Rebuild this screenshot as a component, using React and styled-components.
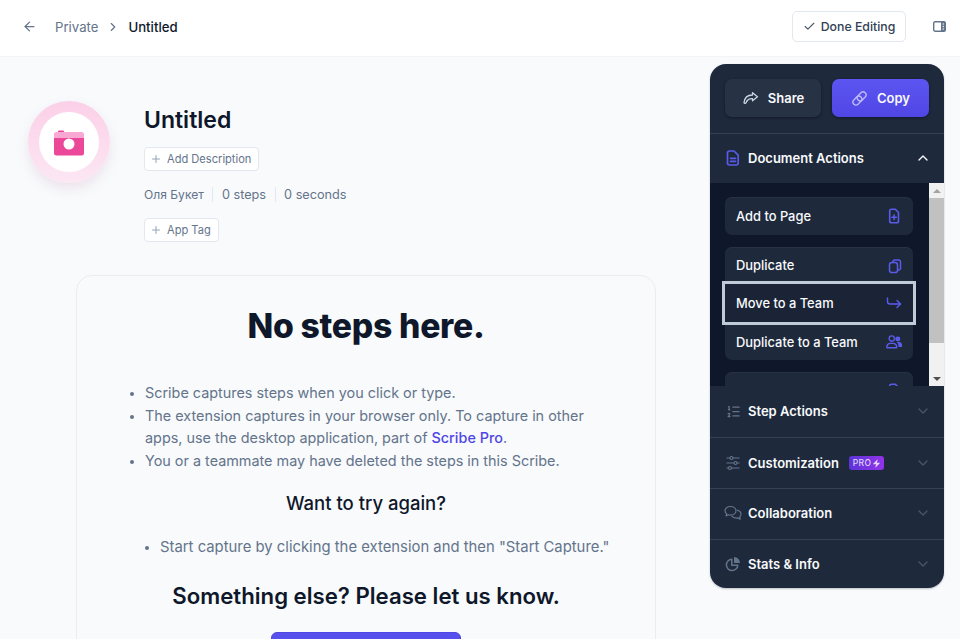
import React from "react";
import styled, { createGlobalStyle } from "styled-components";
import { ArrowLeft, ChevronRight, ChevronUp, ChevronDown, Check, Plus, ListOrdered } from "lucide-react";
import { HiBolt } from "react-icons/hi2";

const Global = createGlobalStyle`
  html, body { margin: 0; height: 639px; overflow: hidden; background: #f8fafc; }
  * { box-sizing: border-box; }
  body { font-family: Inter, "Noto Sans", sans-serif; }
`;
const Page = styled.div`height: 639px; overflow: hidden; display: flex; flex-direction: column;`;
const Header = styled.header`
  height: 57px; flex: none; background: #fff; border-bottom: 1px solid #f1f5f9;
  display: flex; align-items: center; padding: 0 14px 3px 22px;
`;
const Crumbs = styled.nav`display: flex; align-items: center; flex: 1; font-size: 13.2px; color: #64748b;`;
const BackIcon = styled(ArrowLeft)`width: 15px; height: 15px; color: #64748b; margin-right: 18px;`;
const Sep = styled(ChevronRight)`width: 14px; height: 14px; margin: 0 8px 0 8px; color: #64748b;`;
const Current = styled.span`color: #0f172a; font-weight: 500;`;
const DoneButton = styled.button`
  font: 500 12.3px Inter, sans-serif; color: #334155; height: 31px; width: 114px;
  background: #fff; border: 1px solid #e2e8f0; border-radius: 5px;
  display: flex; align-items: center; justify-content: center; gap: 5px; margin-right: 27px;
  svg { width: 13px; height: 13px; color: #475569; }
`;
const PanelToggle = styled.svg`width: 13px; height: 11px; display: block;`;
const Body = styled.div`flex: 1; display: flex; min-height: 0;`;
const Left = styled.main`width: 710px; flex: none; padding: 44px 0 0 28px;`;
const Top = styled.section`display: flex; gap: 34px;`;
const Avatar = styled.div`
  width: 82px; height: 82px; border-radius: 50%; flex: none; background: linear-gradient(#fbd0e8, #fce7f3);
  display: flex; align-items: center; justify-content: center; box-shadow: 0 6px 12px rgba(190,130,160,.18);
`;
const AvatarInner = styled.div`
  width: 60px; height: 60px; border-radius: 50%; background: #fff;
  display: flex; align-items: center; justify-content: center;
`;
const Info = styled.div`display: flex; flex-direction: column; align-items: flex-start; padding-top: 4px;`;
const Title = styled.h2`margin: 0; font-size: 23px; line-height: 30px; font-weight: 600; color: #0f172a;`;
const Chip = styled.button`
  font: 400 11.1px Inter, sans-serif; color: #64748b; height: 24px; padding: 0 7px 0 5px;
  background: #fff; border: 1px solid #e2e8f0; border-radius: 4px;
  display: flex; align-items: center; gap: 5px; margin-top: ${p => p.$top}px;
  svg { width: 12px; height: 12px; color: #94a3b8; }
`;
const Meta = styled.div`display: flex; align-items: center; font-size: 12.7px; color: #64748b; margin-top: 14px; height: 20px; transform: translateY(-1px);`;
const MetaItem = styled.span`
  font-size: ${p => p.$name ? "12.1px" : "inherit"};
  & + & { border-left: 1px solid #e2e8f0; margin-left: 8.5px; padding-left: 8.5px; }
`;
const Card = styled.article`
  margin: 33px 0 0 48px; width: 580px; height: 500px; border: 1px solid #e9edf3; border-radius: 16px;
  padding: 27px 30px 0 41px; text-align: center; background: #f8fafc;
`;
const H1 = styled.h1`margin: 0 0 0 -11px; font-size: 33.7px; line-height: 46px; font-weight: 800; color: #0f172a; letter-spacing: -.3px;`;
const List = styled.ul`
  margin: ${p => p.$top}px 0 0; padding: 0 0 0 ${p => p.$indent}px; text-align: left;
  font-size: ${p => p.$size}px; line-height: 22.5px; color: #64748b;
  li::marker { font-size: 13px; }
`;
const ProLink = styled.a`color: #4f46e5; font-weight: 500;`;
const H3 = styled.h3`margin: 16px 0 0 -11px; font-size: 18.5px; line-height: 30px; font-weight: 500; color: #0f172a;`;
const H2 = styled.h3`margin: 21px 0 0 -11px; font-size: 22.2px; line-height: 32px; font-weight: 600; color: #0f172a;`;
const Primary = styled.button`
  display: block; width: 190px; height: 40px; margin: 20px 0 0 153px; background: #5850ec;
  border: 1px solid #4f46e5; border-radius: 6px;
`;
const Panel = styled.aside`
  width: 234px; height: 524px; margin-top: 7px; border-radius: 16px; background: #1e293b; overflow: hidden;
  box-shadow: 0 1px 2px rgba(15,23,42,.25); display: flex; flex-direction: column; color: #f8fafc;
`;
const Actions = styled.div`height: 70px; padding: 15px 15px 0; display: flex; gap: 11px; border-bottom: 1px solid #334155; flex: none;`;
const ActionButton = styled.button`
  height: 38px; flex: none; width: ${p => p.$w}px; border-radius: 7px; border: 0;
  font: 600 13px Inter, sans-serif; color: #f8fafc; display: flex; align-items: center; justify-content: center; gap: 9px;
  background: ${p => p.$primary ? "linear-gradient(#5d55f1,#4f46e5)" : "#273244"};
  box-shadow: 0 1px 3px rgba(2,6,23,.4);
  svg { width: 17px; height: 17px; color: ${p => p.$primary ? "#bdb9f7" : "#cbd5e1"}; }
`;
const SectionHead = styled.div`
  height: ${p => p.$h}px; flex: none; display: flex; align-items: center; padding: 0 13px ${p => p.$pb || 0}px 16px;
  font-size: 13px; font-weight: 600; color: #f8fafc;
  border-bottom: ${p => p.$line ? "1px solid #334155" : "0"};
`;
const HeadIcon = styled.span`
  width: 14px; height: 16px; margin-right: 8px; display: flex; align-items: center; justify-content: center;
  color: ${p => p.$accent ? "#5b5bea" : "#64748b"};
  svg { flex: none; width: ${p => p.$s || 16}px; height: ${p => p.$s || 16}px; }
`;
const Grow = styled.span`flex: 1;`;
const Caret = styled.span`display: flex; svg { width: 16px; height: 16px; color: ${p => p.$open ? "#f8fafc" : "#475569"}; }`;
const ProBadge = styled.span`
  margin-left: 10px; height: 14px; padding: 0 3px 0 4px; border-radius: 3px; background: linear-gradient(90deg,#5b34d6,#9333ea);
  font-size: 8.5px; font-weight: 500; letter-spacing: .3px; color: #dbd4fb; display: flex; align-items: center; gap: 1px;
  svg { width: 9px; height: 9px; color: #ddd6fe; }
`;
const ScrollBox = styled.div`height: 203px; flex: none; background: #0f172a; display: flex; overflow: hidden;`;
const Items = styled.div`flex: 1; padding: 14px 16px 0 15px; overflow: hidden; display: flex; flex-direction: column; gap: 12px; height: 203px;`;
const Group = styled.div`flex: none; background: #1e293b; border-radius: 7px; box-shadow: inset 0 1px 0 #263245;`;
const Row = styled.div`
  height: ${p => p.$h || 38}px; padding: ${p => p.$pt || 0}px 11px 0; display: flex; align-items: center; justify-content: space-between;
  font-size: 12.9px; font-weight: 500; color: #f8fafc; position: relative;
  ${p => p.$focus && "outline: 3px solid #bfcbd7; background: #1a2436; z-index: 1;"}
  svg { width: 16px; height: 16px; color: #5b5bea; flex: none; }
`;
const Bar = styled.div`width: 15px; flex: none; background: #f1f1f1; display: flex; flex-direction: column; align-items: center;`;
const Arrow = styled.div`
  height: 15px; width: 100%; display: flex; align-items: center; justify-content: center; flex: none;
  &::after { content: ""; border: 4px solid transparent; border-top: 0; border-bottom: 4px solid ${p => p.$dark ? "#505050" : "#a3a3a3"};
    transform: ${p => p.$down ? "rotate(180deg)" : "none"}; }
`;
const Thumb = styled.div`width: 100%; height: 145px; background: #c1c1c1; flex: none;`;
const BarGap = styled.div`flex: 1;`;

const Camera = () => (
  <svg width="30" height="27" viewBox="0 0 30 27">
    <path d="M4 2.500a1 1 0 0 1 1-1h4a1 1 0 0 1 1 1V3H4z" fill="#ec4899" />
    <path d="M0 5.500A2.500 2.500 0 0 1 2.500 3h25A2.500 2.500 0 0 1 30 5.500V9H0z" fill="#f9a8d4" />
    <path d="M0 9h30v15a2.500 2.500 0 0 1-2.500 2.500h-25A2.500 2.500 0 0 1 0 24z" fill="#ec4899" />
    <circle cx="15" cy="15" r="5.500" fill="#fff" />
  </svg>
);
const ShareGlyph = () => (
  <svg viewBox="0 0 17 17" fill="none" stroke="currentColor" strokeWidth="1.300" strokeLinejoin="round" strokeLinecap="round">
    <path d="M10.500 2.800 15.500 6.800 10.500 10.800V8.600C8 8.400 6 9.200 4.800 11.200" />
    <path d="M10.500 2.800V5C6 5 2.500 7.800 2 12.800c.5 1 1.800 1 2.800-1.600" />
  </svg>
);
const LinkGlyph = () => (
  <svg viewBox="0 0 17 17" fill="none" stroke="currentColor" strokeWidth="1.400">
    <g transform="rotate(-45 8.500 8.500)">
      <rect x="0.500" y="5.500" width="10" height="6" rx="3" />
      <rect x="6.500" y="5.500" width="10" height="6" rx="3" />
    </g>
  </svg>
);
const DocGlyph = () => (
  <svg viewBox="0 0 16 16" fill="none" stroke="currentColor" strokeWidth="1.700" strokeLinejoin="round" strokeLinecap="round">
    <path d="M4.300 1h4.700l4.200 4.200v8a1.800 1.800 0 0 1-1.800 1.800H4.300a1.800 1.800 0 0 1-1.800-1.800V2.800A1.800 1.800 0 0 1 4.300 1z" />
    <path d="M5.500 8.300h5M5.500 11.300h5" />
  </svg>
);
const AddPageGlyph = () => (
  <svg viewBox="0 0 16 16" fill="none" stroke="currentColor" strokeWidth="1.600" strokeLinejoin="round" strokeLinecap="round">
    <path d="M5.500 1.200h3.800l3.200 3.300v8.500a1.800 1.800 0 0 1-1.800 1.800H5.500a1.800 1.800 0 0 1-1.800-1.800V3a1.800 1.800 0 0 1 1.800-1.800z" />
    <path d="M8.100 7v4.400M5.900 9.200h4.400" />
  </svg>
);
const DuplicateGlyph = () => (
  <svg viewBox="0 0 16 16" fill="none" stroke="currentColor" strokeWidth="1.500" strokeLinejoin="round" strokeLinecap="round">
    <rect x="3.500" y="4.600" width="8" height="10" rx="2.400" />
    <path d="M7 4.400V3.700A1.800 1.800 0 0 1 8.800 1.900h3.900A1.800 1.800 0 0 1 14.500 3.700v6.600A1.800 1.800 0 0 1 12.700 12.100H11.700" />
  </svg>
);
const MoveGlyph = () => (
  <svg viewBox="0 0 16 16" fill="none" stroke="currentColor" strokeWidth="1.400" strokeLinejoin="round" strokeLinecap="round">
    <path d="M1.500 3v3.500A2.500 2.500 0 0 0 4 9h10.500" />
    <path d="M11 5.500 14.500 9 11 12.500" />
  </svg>
);
const TeamGlyph = () => (
  <svg viewBox="0 0 18 16" fill="none" stroke="currentColor" strokeWidth="1.500">
    <circle cx="6.500" cy="4.200" r="3" />
    <path d="M1 14.500v-1.500a4 4 0 0 1 4-3.500h3a4 4 0 0 1 4 3.500v1.500z" strokeLinejoin="round" />
    <circle cx="13.300" cy="4.500" r="2.800" fill="currentColor" stroke="none" />
    <path d="M12 8h2.500a3.500 3.500 0 0 1 3.500 3.500v2h-4V12a5 5 0 0 0-2-4z" fill="currentColor" stroke="none" />
  </svg>
);
const SlidersGlyph = () => (
  <svg viewBox="0 0 16 16" fill="none" stroke="currentColor" strokeWidth="1.200">
    <path d="M1.500 3h3.500M8 3h6.500M1.500 8h7.500M12 8h2.500M1.500 13h2M6.500 13h8" />
    <circle cx="6.500" cy="3" r="1.500" /><circle cx="10.500" cy="8" r="1.500" /><circle cx="5" cy="13" r="1.500" />
  </svg>
);
const ChatGlyph = () => (
  <svg viewBox="0 0 18 16" fill="none" stroke="currentColor" strokeWidth="1.200" strokeLinejoin="round">
    <path d="M6.500 1.500C3.400 1.500 1 3.400 1 5.800c0 1.300.7 2.400 1.800 3.200L2 11l2.600-1.200c.6.200 1.200.3 1.900.3 3.100 0 5.500-1.900 5.500-4.300S9.600 1.500 6.500 1.500z" />
    <path d="M13 5.200c2.300.5 4 2 4 4 0 1-.5 2-1.300 2.700l.6 2.300-2.600-1.300c-.5.100-1 .2-1.500.2-2 0-3.700-.9-4.500-2.200" />
  </svg>
);
const PieGlyph = () => (
  <svg viewBox="0 0 16 16">
    <path d="M6.800 3.200a5.700 5.700 0 1 0 6 6H6.800z" fill="none" stroke="currentColor" strokeWidth="1.500" strokeLinejoin="round" />
    <path d="M9 1a6 6 0 0 1 6 6H9z" fill="currentColor" />
  </svg>
);

const sections = [
  ["Step Actions", <ListOrdered />, 15, false, 52, 1],
  ["Customization", <SlidersGlyph />, 16, true, 51, 0],
  ["Collaboration", <ChatGlyph />, 18, false, 51, 2],
  ["Stats & Info", <PieGlyph />, 16, false, 48, 0],
];

export default function App() {
  return (
    <Page>
      <Global />
      <Header>
        <Crumbs><BackIcon /><span>Private</span><Sep /><Current>Untitled</Current></Crumbs>
        <DoneButton><Check />Done Editing</DoneButton>
        <PanelToggle viewBox="0 0 13 11">
          <rect x=".7" y=".7" width="11.600" height="9.600" rx="1.500" fill="none" stroke="#64748b" strokeWidth="1.400" />
          <rect x="8" y=".7" width="4.300" height="9.600" fill="#64748b" />
          <circle cx="10.200" cy="3" r=".7" fill="#fff" /><circle cx="10.200" cy="5.500" r=".7" fill="#fff" /><circle cx="10.200" cy="8" r=".7" fill="#fff" />
        </PanelToggle>
      </Header>
      <Body>
        <Left>
          <Top>
            <Avatar><AvatarInner><Camera /></AvatarInner></Avatar>
            <Info>
              <Title>Untitled</Title>
              <Chip $top={12}><Plus />Add Description</Chip>
              <Meta><MetaItem $name>Оля Букет</MetaItem><MetaItem>0 steps</MetaItem><MetaItem>0 seconds</MetaItem></Meta>
              <Chip $top={13}><Plus />App Tag</Chip>
            </Info>
          </Top>
          <Card>
            <H1>No steps here.</H1>
            <List $top={33} $indent={27} $size={14.4}>
              <li>Scribe captures steps when you click or type.</li>
              <li>The extension captures in your browser only. To capture in other apps, use the desktop application, part of <ProLink>Scribe Pro</ProLink>.</li>
              <li>You or a teammate may have deleted the steps in this Scribe.</li>
            </List>
            <H3>Want to try again?</H3>
            <List $top={18} $indent={42} $size={14.85}>
              <li>Start capture by clicking the extension and then "Start Capture."</li>
            </List>
            <H2>Something else? Please let us know.</H2>
            <Primary />
          </Card>
        </Left>
        <Panel>
          <Actions>
            <ActionButton $w={96}><ShareGlyph />Share</ActionButton>
            <ActionButton $w={97} $primary><LinkGlyph />Copy</ActionButton>
          </Actions>
          <SectionHead $h={49} $pb={2}>
            <HeadIcon $accent $s={16}><DocGlyph /></HeadIcon>Document Actions<Grow /><Caret $open><ChevronUp /></Caret>
          </SectionHead>
          <ScrollBox>
            <Items>
              <Group><Row><span>Add to Page</span><AddPageGlyph /></Row></Group>
              <Group>
                <Row $h={37}><span>Duplicate</span><DuplicateGlyph /></Row>
                <Row $focus><span>Move to a Team</span><MoveGlyph /></Row>
                <Row $pt={2}><span>Duplicate to a Team</span><TeamGlyph /></Row>
              </Group>
              <Group><Row><span /><AddPageGlyph /></Row></Group>
            </Items>
            <Bar><Arrow /><Thumb /><BarGap /><Arrow $down $dark /></Bar>
          </ScrollBox>
          {sections.map(([name, icon, size, pro, h, pb], i) => (
            <SectionHead key={name} $h={h} $pb={pb} $line={i < 3}>
              <HeadIcon $s={size}>{icon}</HeadIcon>{name}
              {pro && <ProBadge>PRO<HiBolt /></ProBadge>}
              <Grow /><Caret><ChevronDown /></Caret>
            </SectionHead>
          ))}
        </Panel>
      </Body>
    </Page>
  );
}
